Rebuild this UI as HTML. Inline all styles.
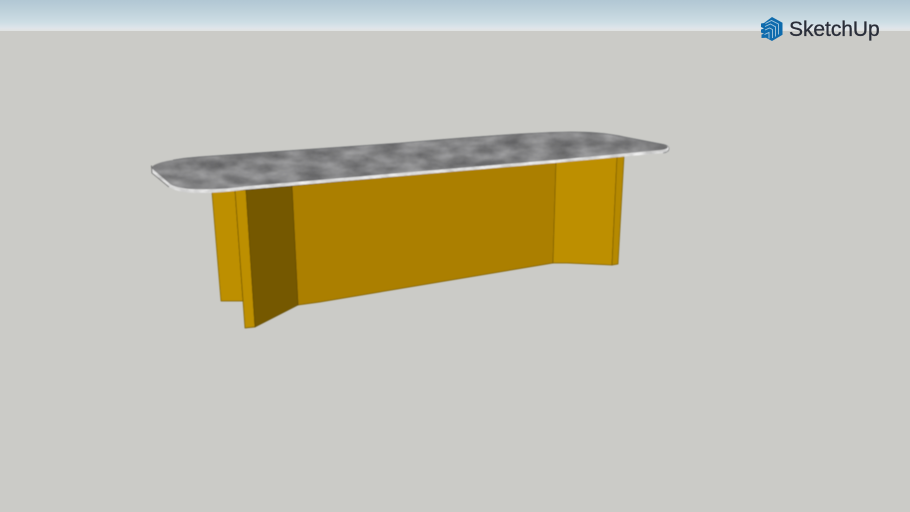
<!DOCTYPE html>
<html><head><meta charset="utf-8"><style>
html,body{margin:0;padding:0;width:910px;height:512px;overflow:hidden;background:#cbcbc7}
#sky{position:absolute;left:0;top:0;width:910px;height:31px;background:linear-gradient(180deg,#b1c7d4 0,#bdd0da 10px,#cddde4 22px,#dfe5ea 28px,#e1e4e5 30px,#dfe1e1 31px)}
svg{position:absolute;left:0;top:0}
#t{position:absolute;left:789px;top:17px;font:500 21px/26px "Liberation Sans",sans-serif;color:#2a2e39;letter-spacing:-.05px;-webkit-text-stroke:.3px #2a2e39}
</style></head><body>
<div id="sky"></div>
<svg width="910" height="512" viewBox="0 0 910 512">
<defs>
<filter id="m" x="0" y="0" width="100%" height="100%" color-interpolation-filters="sRGB">
<feTurbulence type="fractalNoise" baseFrequency="0.04 0.1" numOctaves="5" seed="11"/>
<feColorMatrix values="0.34 0 0 0 0.34  0.34 0 0 0 0.34  0.34 0 0 0 0.345  0 0 0 0 1"/>
<feGaussianBlur stdDeviation="0.5"/>
<feComposite in2="SourceAlpha" operator="in"/>
</filter>
<filter id="e" x="0" y="0" width="100%" height="100%" color-interpolation-filters="sRGB">
<feTurbulence type="fractalNoise" baseFrequency="0.09 0.2" numOctaves="3" seed="4"/>
<feColorMatrix values="0.3 0 0 0 0.72  0.3 0 0 0 0.72  0.3 0 0 0 0.72  0 0 0 0 1"/>
<feComposite in2="SourceAlpha" operator="in"/>
</filter>
<filter id="b" x="-5%" y="-5%" width="110%" height="110%"><feGaussianBlur stdDeviation="0.4"/></filter>
</defs>
<g filter="url(#b)" stroke-linejoin="round">
<path d="M212 192L235 190L243 301L221 301Z" fill="#bd8f00" stroke="#7a5c00" stroke-width=".7"/>
<path d="M292 186L556 162L553 263L320 302L298 305Z" fill="#ab7f00" stroke="#7a5c00" stroke-width=".7"/>
<path d="M556 162L617 157L612 265L567 263L553 263Z" fill="#bd8f00" stroke="#7a5c00" stroke-width=".7"/>
<path d="M617 157L624 156L618 264L612 265Z" fill="#b58900" stroke="#7a5c00" stroke-width=".7"/>
<path d="M235 190L246 190L255 327L245 328Z" fill="#bd8f00" stroke="#6f5400" stroke-width=".7"/>
<path d="M246 190L292 186L298 305L255 327Z" fill="#755800" stroke="#5d4600" stroke-width=".7"/>
<path filter="url(#e)" d="M151 168L152 173L169 187C175 190.500 182 192.300 190 192.700C205 193.200 222 192.800 244 189.700L400 176.300L560 162.500L663 153C667 152.500 669 151 669 148.500C669 147 668 145.800 664 144.800L640 150L400 170L170 182Z" fill="#ddd"/>
<path filter="url(#m)" d="M151.500 168C153 164.500 160 162 173 160C182 158.500 190 157.500 200 156.800L400 143C470 137 530 132.500 566 132C590 131.800 606 133 625 137L664 144.500C667 145.300 668 146.500 667.500 148C666 149 664 149.500 661 150L560 159.500L400 173L244 186.500C222 189.500 205 189.800 190 189C180 188 174 186.500 170 184Z" fill="#888"/>
<path d="M151.500 165.500L152 173L169 187" fill="none" stroke="#555" stroke-width=".8"/>
<path d="M173 160C182 158.500 190 157.500 200 156.800L400 143C470 137 530 132.500 566 132C590 131.800 606 133 625 137L664 144.500C668 145.500 669 147 669 148.500C669 151 667 152.500 663 153" fill="none" stroke="#65676a" stroke-width=".6"/>
</g>
<g transform="translate(761,17)">
<path d="M11 0L21.500 5.800V17.800L11 24L5 20.800L0.500 21V17.500L3 16.800L0 15.500V12.500L3 11.500L0 10V6.500L3 6Z" fill="#0e6bad"/>
<g fill="none" stroke="#a9c9de" stroke-width=".9">
<path d="M4.500 6.500L10.500 3.500L17.500 7V17.500"/>
<path d="M4 9.500L9.500 7L14.500 9.800V19.500"/>
<path d="M4 13L8.500 11L11.500 12.500V21"/>
<path d="M3.500 17.500L8 15.500V21.500"/>
</g>
</g>
</svg>
<div id="t">SketchUp</div>
</body></html>
